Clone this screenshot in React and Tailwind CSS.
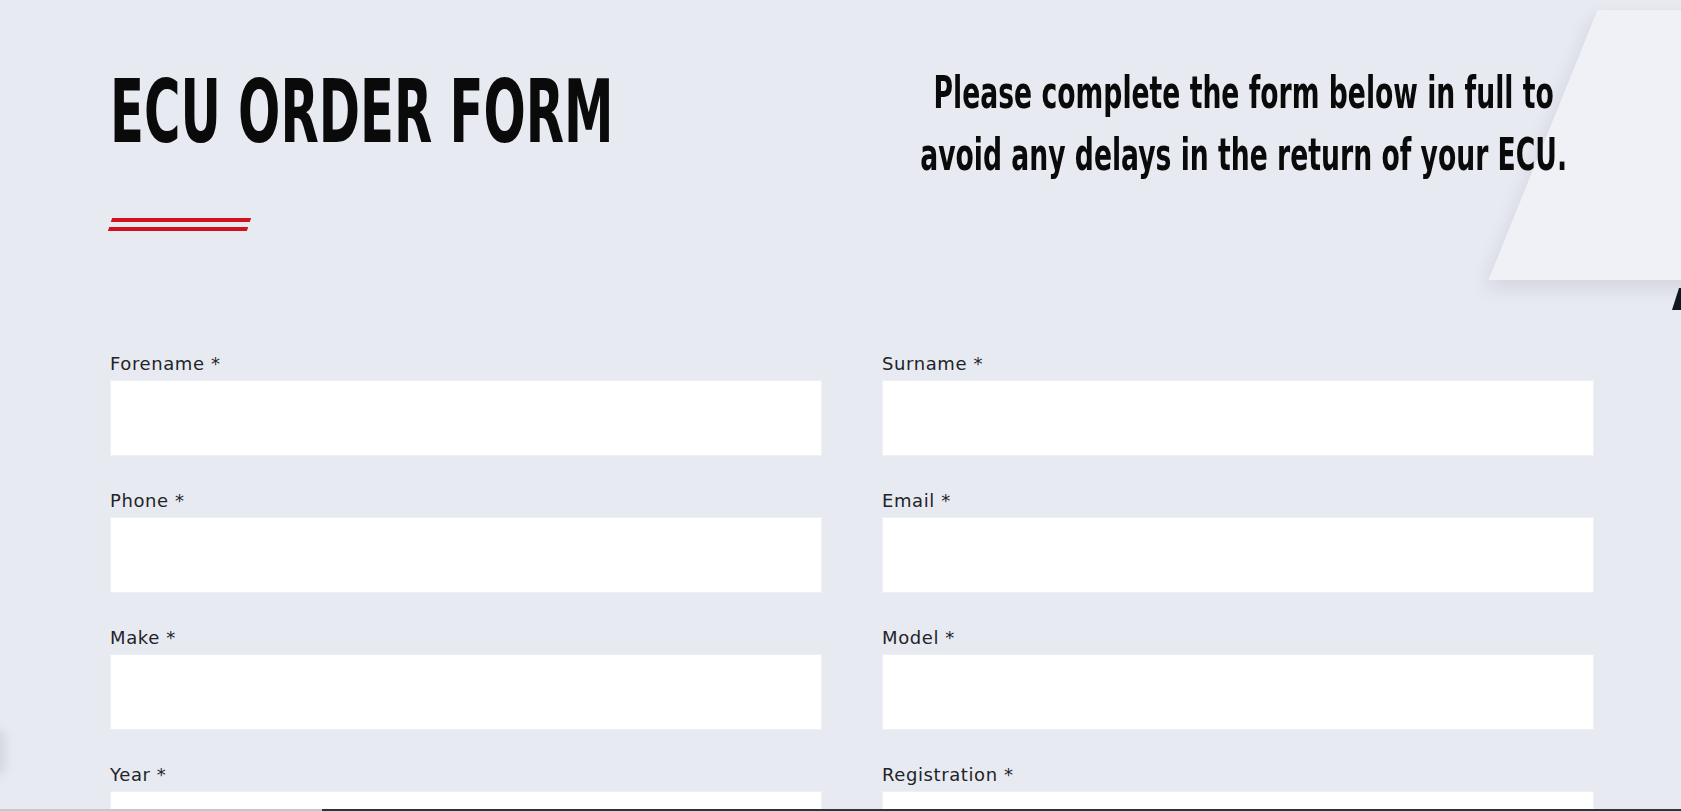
import React from "react";

const fields = [
  ["Forename *", "Surname *"],
  ["Phone *", "Email *"],
  ["Make *", "Model *"],
  ["Year *", "Registration *"],
];

function Field({ label }) {
  return (
    <div className="flex flex-col">
      <label className="-mt-[2px] h-[24px] text-[18px] leading-[24px] tracking-[0.6px] text-[#222428] font-['DejaVu_Sans',sans-serif]">
        {label}
      </label>
      <input
        type="text"
        className="mt-[4px] h-[76px] w-full bg-white border border-[#eef0f5] outline-none"
      />
    </div>
  );
}

export default function App() {
  return (
    <div className="relative h-[811px] w-full overflow-hidden bg-[#e8eaf2]">
      {/* decorative panel top-right */}
      <div className="absolute left-[1543px] top-[10px] h-[270px] w-[320px] -skew-x-[22deg] bg-[#f0f1f7] shadow-[0_8px_18px_rgba(20,25,45,0.10)]" />
      <svg className="absolute left-[1670px] top-[288px]" width="14" height="24" viewBox="0 0 14 24">
        <polygon points="9,0 14,0 14,22 2,22" fill="#0f161d" />
      </svg>
      <div className="absolute left-[-14px] top-[728px] h-[48px] w-[20px] rounded-full bg-[#d6d8e0] blur-[4px]" />

      <div className="relative pl-[110px] pr-[87px] pt-[66px]">
        {/* header */}
        <div className="grid grid-cols-2 gap-x-[60px] items-start">
          <div className="flex flex-col">
            <h1 className="origin-left scale-x-[0.628] whitespace-nowrap text-[88px] leading-[92px] font-bold text-[#0a0a0a] font-['Liberation_Sans_Narrow','DejaVu_Sans_Condensed','Liberation_Sans',sans-serif]">
              ECU ORDER FORM
            </h1>
            <div className="-ml-[3px] mt-[60px] flex w-[145px] -skew-x-[18deg] flex-col gap-[5px] pl-[3px]">
              <div className="h-[4px] w-[139px] bg-[#d1121c]" />
              <div className="h-[4px] w-[139px] bg-[#d1121c]" />
            </div>
          </div>
          <div className="-mt-[4px] flex justify-center pl-[12px]">
            <p className="scale-x-[0.673] whitespace-nowrap text-center text-[44px] leading-[62px] font-bold text-[#0a0a0a] font-['Liberation_Sans_Narrow','DejaVu_Sans_Condensed','Liberation_Sans',sans-serif]">
              Please complete the form below in full to
              <br />
              avoid any delays in the return of your ECU.
            </p>
          </div>
        </div>

        {/* form */}
        <form className="mt-[123px] grid grid-cols-2 gap-x-[60px] gap-y-[35px]">
          {fields.map(([a, b]) => (
            <React.Fragment key={a}>
              <Field label={a} />
              <Field label={b} />
            </React.Fragment>
          ))}
        </form>
      </div>

      {/* bottom strip */}
      <div className="absolute bottom-0 left-0 right-0 flex h-[2px]">
        <div className="w-[322px] bg-[#c6c8ce]" />
        <div className="flex-1 bg-[#2a3540]" />
      </div>
    </div>
  );
}
